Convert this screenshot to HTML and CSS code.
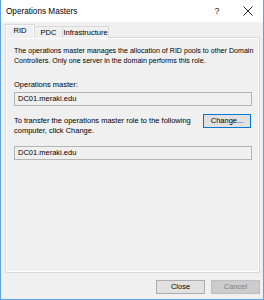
FILE: index.html
```html
<!DOCTYPE html>
<html>
<head>
<meta charset="utf-8">
<link rel="stylesheet" href="styles.css">
</head>
<body>
<div class="window">
  <div class="titlebar">
    <span class="title">Operations Masters</span>
    <span class="tb-help">?</span>
    <span class="tb-close">
      <svg width="10" height="10" viewBox="0 0 10 10"><path d="M0.5 0.5L9.5 9.5M9.5 0.5L0.5 9.5" stroke="#222" stroke-width="1" fill="none"/></svg>
    </span>
  </div>
  <div class="client">
    <div class="tabs">
      <div class="tab selected">RID</div>
      <div class="tab">PDC</div>
      <div class="tab">Infrastructure</div>
    </div>
    <div class="panel">
      <p class="desc">The operations master manages the allocation of RID pools to other Domain<br>Controllers. Only one server in the domain performs this role.</p>
      <div class="label">Operations master:</div>
      <div class="field">DC01.meraki.edu</div>
      <div class="transfer">
        <div class="transfer-text">To transfer the operations master role to the following<br>computer, click Change.</div>
        <div class="btn default">Change...</div>
      </div>
      <div class="field">DC01.meraki.edu</div>
    </div>
    <div class="buttons">
      <div class="btn">Close</div>
      <div class="btn disabled">Cancel</div>
    </div>
  </div>
</div>
</body>
</html>
```
FILE: styles.css
```css
html, body {
  margin: 0;
  padding: 0;
}
body {
  width: 264px;
  height: 300px;
  font-family: "Liberation Sans", Arial, sans-serif;
  font-size: 7.5px;
  color: #000;
  background: #fff;
}
.window {
  box-sizing: border-box;
  width: 264px;
  height: 300px;
  border: 1px solid #5ea3dd;
  border-top: none;
  display: flex;
  flex-direction: column;
}
.titlebar {
  height: 22px;
  background: #fff;
  display: flex;
  align-items: center;
  flex-shrink: 0;
}
.title {
  font-size: 8.2px;
  margin-left: 5px;
  flex: 1;
  color: #000;
}
.tb-help {
  font-size: 9px;
  width: 10px;
  text-align: center;
  margin-right: 21px;
  color: #222;
}
.tb-close {
  display: flex;
  width: 10px;
  margin-right: 10px;
}
.client {
  flex: 1;
  background: #f0f0f0;
  display: flex;
  flex-direction: column;
  padding: 3px 3px 0 4px;
}
.tabs {
  display: flex;
  align-items: flex-end;
  height: 13px;
  margin-bottom: -1px;
  position: relative;
  z-index: 1;
}
.tab {
  box-sizing: border-box;
  height: 12px;
  border: 1px solid #d9d9d9;
  border-bottom: none;
  background: #f0f0f0;
  display: flex;
  align-items: center;
  justify-content: center;
  margin-left: -1px;
  line-height: 1;
  white-space: nowrap;
}
.tab:first-child {
  margin-left: 0;
}
.tab:nth-child(1) { width: 30px; }
.tab:nth-child(2) { width: 29px; }
.tab:nth-child(3) { width: 47px; }
.tab.selected {
  height: 14px;
  border-color: #d9d9d9;
  background: #f0f0f0;
  padding-bottom: 2px;
  box-shadow: inset 1px 1px 0 #fff, inset -1px 0 0 #fff;
}
.panel {
  box-sizing: border-box;
  height: 236px;
  border: 1px solid #d9d9d9;
  box-shadow: inset 1px 1px 0 #fff, inset -1px -1px 0 #fff;
  padding: 8px 7px 0 8px;
  display: flex;
  flex-direction: column;
}
.desc {
  margin: 0;
  font-size: 7.1px;
  line-height: 10px;
  white-space: nowrap;
}
.label {
  margin-top: 14px;
  line-height: 10px;
}
.field {
  box-sizing: border-box;
  height: 14px;
  border: 1px solid #b4b4b4;
  background: #f0f0f0;
  padding-left: 3px;
  line-height: 12px;
  margin-top: 2px;
}
.transfer {
  display: flex;
  align-items: flex-start;
  margin-top: 8px;
  margin-bottom: 8px;
}
.transfer-text {
  flex: 1;
  line-height: 10px;
  padding-top: 2px;
  white-space: nowrap;
}
.btn {
  box-sizing: border-box;
  width: 48px;
  height: 14px;
  border: 1px solid #adadad;
  background: #e1e1e1;
  display: flex;
  align-items: center;
  justify-content: center;
  line-height: 1;
  flex-shrink: 0;
}
.btn.default {
  border-color: #0078d7;
  margin-right: 1px;
}
.btn.disabled {
  border-color: #bfbfbf;
  background: #cccccc;
  color: #838383;
}
.buttons {
  display: flex;
  justify-content: flex-end;
  gap: 6px;
  margin-top: 7px;
}
.buttons .btn {
  width: 49px;
}
```
